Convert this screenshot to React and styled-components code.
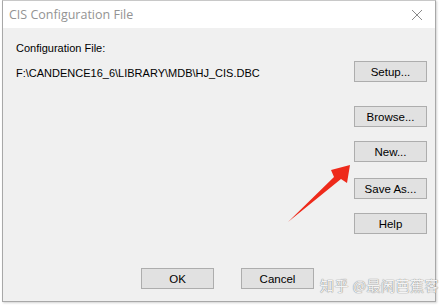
import styled, { createGlobalStyle } from "styled-components";

const Global = createGlobalStyle`
  html, body {
    margin: 0;
    padding: 0;
    background: #ffffff;
  }
`;

const Page = styled.div`
  width: 441px;
  height: 306px;
  position: relative;
  overflow: hidden;
`;

const Window = styled.div`
  margin-left: 2px;
  width: 432px;
  height: 300px;
  border: 1px solid #a8a8a8;
  border-top-color: #c8c8c8;
  box-shadow: 1px 1px 2px rgba(0, 0, 0, 0.18);
  display: flex;
  flex-direction: column;
  background: #f0f0f0;
`;

const TitleBar = styled.div`
  height: 27px;
  background: #ffffff;
  display: flex;
  align-items: center;
  justify-content: space-between;
  padding: 0 8px 0 6px;
  flex-shrink: 0;
`;

const Title = styled.span`
  font-family: "Open Sans", "Noto Sans", sans-serif;
  font-size: 12.5px;
  color: #939393;
  padding-bottom: 1px;
`;

const Close = styled.svg`
  width: 12px;
  height: 12px;
  margin-right: 4px;
`;

const Body = styled.div`
  flex: 1;
  display: flex;
  flex-direction: column;
`;

const Content = styled.div`
  flex: 1;
  display: flex;
  justify-content: space-between;
  padding: 13px 8px 0 13px;
`;

const Info = styled.div`
  display: flex;
  flex-direction: column;
  gap: 11px;
`;

const Text = styled.div`
  font-family: "Liberation Sans", Arial, sans-serif;
  font-size: 11px;
  color: #000;
  line-height: 14px;
`;

const Buttons = styled.div`
  display: flex;
  flex-direction: column;
  padding-top: 20px;
`;

const Button = styled.div`
  width: 71px;
  height: 19px;
  margin-top: ${(p) => p.$gap || 0}px;
  border: 1px solid #adadad;
  background: #e1e1e1;
  display: flex;
  align-items: center;
  justify-content: center;
  font-family: "Liberation Sans", Arial, sans-serif;
  font-size: 11.5px;
  color: #000;
`;

const Footer = styled.div`
  display: flex;
  gap: 27px;
  padding: 0 0 12px 138px;
`;

const Arrow = styled.svg`
  position: absolute;
  left: 280px;
  top: 158px;
  width: 80px;
  height: 70px;
`;

const Watermark = styled.div`
  position: absolute;
  left: 320px;
  top: 275px;
  font-family: "Noto Sans CJK SC", sans-serif;
  font-size: 14px;
  color: #f4f4f4;
  text-shadow: 0 0 1px #888, 0 0 1px #888;
  letter-spacing: 0.5px;
`;

export default function App() {
  return (
    <Page>
      <Global />
      <Window>
        <TitleBar>
          <Title>CIS Configuration File</Title>
          <Close viewBox="0 0 12 12">
            <path d="M1 1 L11 11 M11 1 L1 11" stroke="#8a8a8a" strokeWidth="1" fill="none" />
          </Close>
        </TitleBar>
        <Body>
          <Content>
            <Info>
              <Text>Configuration File:</Text>
              <Text>F:\CANDENCE16_6\LIBRARY\MDB\HJ_CIS.DBC</Text>
            </Info>
            <Buttons>
              <Button>Setup...</Button>
              <Button $gap={24}>Browse...</Button>
              <Button $gap={14}>New...</Button>
              <Button $gap={16}>Save As...</Button>
              <Button $gap={14}>Help</Button>
            </Buttons>
          </Content>
          <Footer>
            <Button>OK</Button>
            <Button>Cancel</Button>
          </Footer>
        </Body>
      </Window>
      <Arrow viewBox="0 0 80 70">
        <path d="M8 64 L54 19 L51 12 L70 7 L67 25 L61 21 Z" fill="#ee2a1b" />
      </Arrow>
      <Watermark>知乎 @最闲芭蕉客</Watermark>
    </Page>
  );
}
